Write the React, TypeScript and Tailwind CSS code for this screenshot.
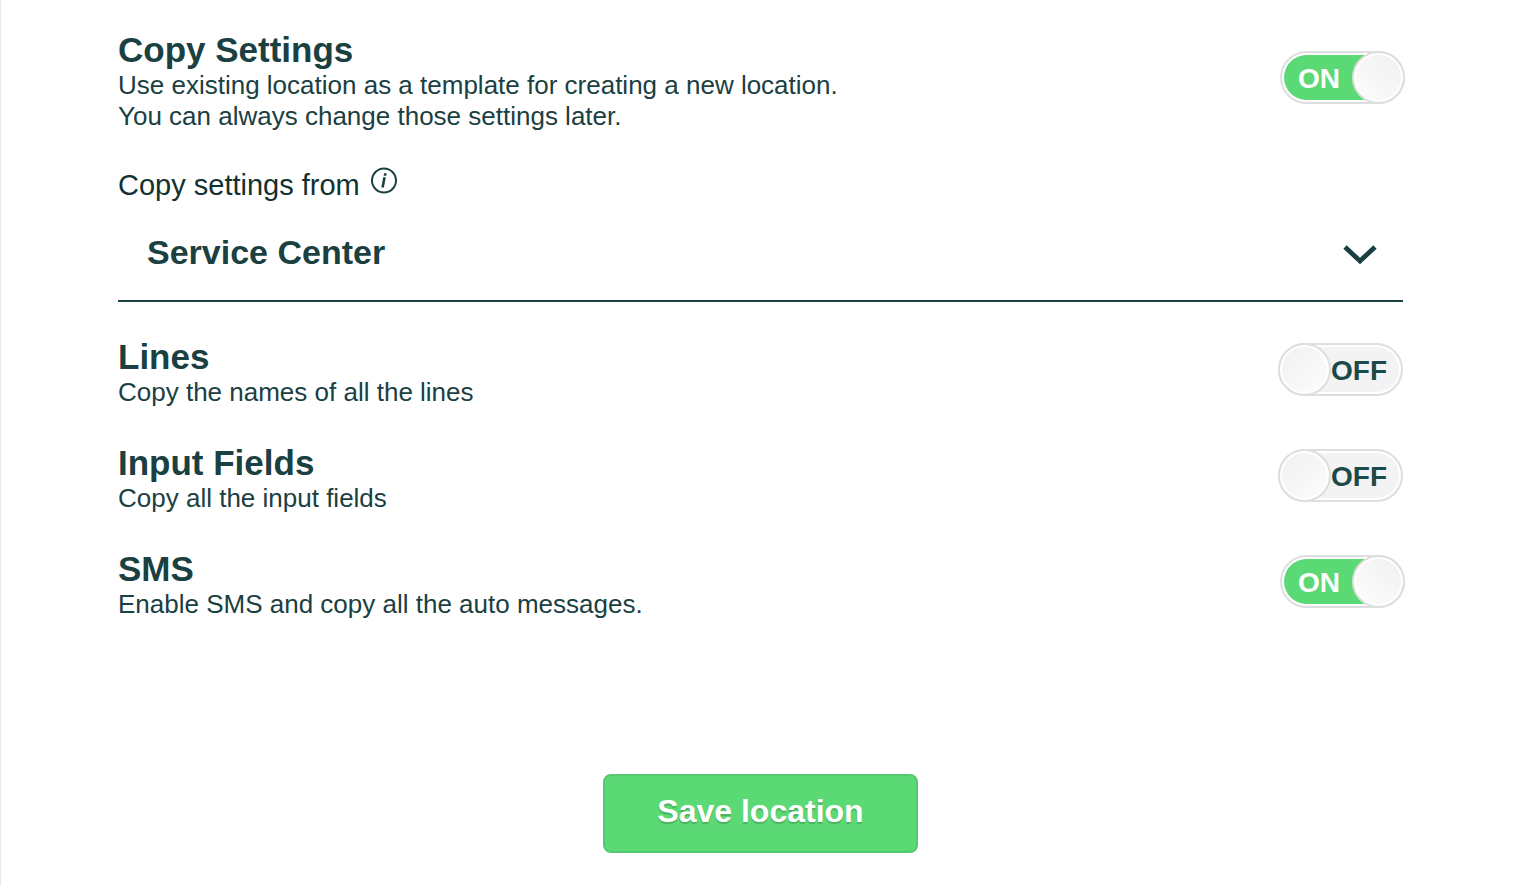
import { useId, useState } from "react";

type ToggleProps = {
  id: string;
  checked: boolean;
  onChange: (checked: boolean) => void;
};

function Toggle({ id, checked, onChange }: ToggleProps) {
  return (
    <span
      className={`relative flex h-[53px] w-[125px] shrink-0 rounded-full border-2 border-[#dedede] bg-white p-0.5 has-focus-visible:outline-2 ${
        checked ? "-mr-0.5" : ""
      }`}
    >
      <span
        aria-hidden="true"
        className={`flex flex-1 items-center rounded-full pt-0.5 text-[28px] leading-8 font-bold ${
          checked
            ? "justify-start bg-[#5bd975] pl-3.5 text-white"
            : "justify-end bg-[#f3f3f3] pr-3 text-[#1c4a4a]"
        }`}
      >
        {checked ? "ON" : "OFF"}
      </span>
      <span
        aria-hidden="true"
        className={`absolute -top-0.5 size-[53px] rounded-full border-2 border-[#dedede] bg-white p-0.5 ${
          checked ? "-right-0.5" : "-left-0.5"
        }`}
      >
        <span
          className={`block size-full rounded-full ${
            checked
              ? "bg-linear-to-tr from-[#fcfcfc] to-[#f1f1f1]"
              : "bg-linear-to-br from-[#f1f1f1] to-[#fcfcfc]"
          }`}
        />
      </span>
      <input
        id={id}
        type="checkbox"
        role="switch"
        checked={checked}
        onChange={(e) => onChange(e.target.checked)}
        className="absolute inset-0 cursor-pointer opacity-0"
      />
    </span>
  );
}

type SettingRowProps = {
  title: string;
  lines: string[];
  initial: boolean;
};

function SettingRow({ title, lines, initial }: SettingRowProps) {
  const id = useId();
  const [checked, setChecked] = useState(initial);
  return (
    <div className="flex items-start justify-between gap-8">
      <div>
        <label htmlFor={id} className="block text-[35px] leading-10 font-bold">
          {title}
        </label>
        {lines.map((line) => (
          <p key={line} className="text-[26px] leading-[31px]">
            {line}
          </p>
        ))}
      </div>
      <div className={lines.length > 1 ? "pt-[21px]" : "pt-[6px]"}>
        <Toggle id={id} checked={checked} onChange={setChecked} />
      </div>
    </div>
  );
}

export default function App() {
  return (
    <main className="min-h-screen border-l border-[#e8e8e8] bg-white pt-[30px] pr-[116px] pb-8 pl-[117px] font-['Liberation_Sans',Arial,sans-serif] text-[#1a4041]">
      <form onSubmit={(e) => e.preventDefault()} className="flex flex-col">
        <SettingRow
          title="Copy Settings"
          lines={[
            "Use existing location as a template for creating a new location.",
            "You can always change those settings later.",
          ]}
          initial={true}
        />

        <div className="mt-9 flex items-start gap-[11px]">
          <label htmlFor="source" className="text-[29px] leading-[34px] text-[#123132]">
            Copy settings from
          </label>
          <button type="button" aria-label="About copying settings" className="cursor-pointer">
            <svg
              width="26"
              height="26"
              viewBox="0 0 26 26"
              fill="none"
              className="block overflow-visible"
            >
              <circle cx="13" cy="12.5" r="12" stroke="#1a4041" strokeWidth="2" />
              <path d="M13.1 5.2H15.7L15.2 7.7H12.6Z" fill="#1a4041" />
              <path d="M12.2 9.2H14.8L12.9 19.6H10.3Z" fill="#1a4041" />
            </svg>
          </button>
        </div>

        <div className="grid border-b-2 border-[#1a4041]">
          <select
            id="source"
            defaultValue="Service Center"
            className="col-start-1 row-start-1 h-[98px] w-full cursor-pointer appearance-none bg-transparent pt-0.5 pl-[29px] text-[34px] font-bold"
          >
            <option>Service Center</option>
          </select>
          <svg
            width="34"
            height="20"
            viewBox="0 0 34 20"
            fill="none"
            aria-hidden="true"
            className="pointer-events-none col-start-1 row-start-1 mt-2 mr-[26px] self-center justify-self-end"
          >
            <path d="M2 2L17 16L32 2" stroke="#1a4041" strokeWidth="4.8" />
          </svg>
        </div>

        <div className="mt-[35px] flex flex-col gap-[35px]">
          <SettingRow title="Lines" lines={["Copy the names of all the lines"]} initial={false} />
          <SettingRow title="Input Fields" lines={["Copy all the input fields"]} initial={false} />
          <SettingRow
            title="SMS"
            lines={["Enable SMS and copy all the auto messages."]}
            initial={true}
          />
        </div>

        <button
          type="submit"
          className="mt-[154px] cursor-pointer self-center rounded-lg border-2 border-[#54c96f] bg-[#5bd975] px-[52px] pt-[17px] pb-[22px] text-[32px] leading-9 font-bold text-white [text-shadow:0_2px_1px_rgba(0,0,0,0.18)]"
        >
          Save location
        </button>
      </form>
    </main>
  );
}
